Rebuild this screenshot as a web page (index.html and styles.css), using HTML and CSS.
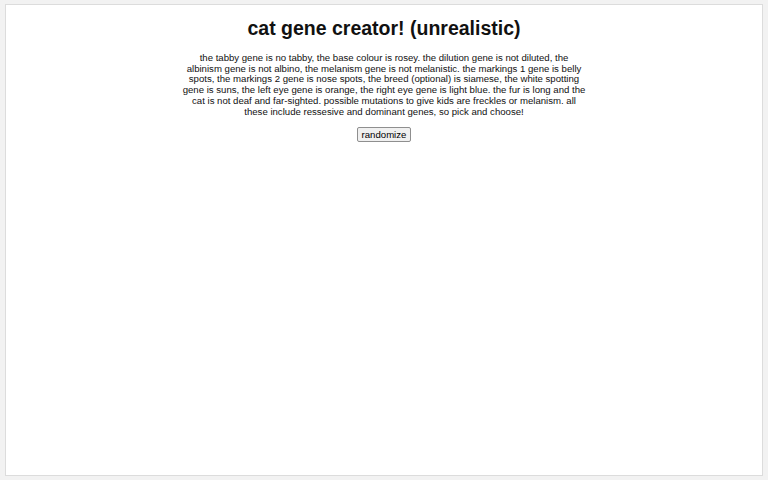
FILE: index.html
```html
<!DOCTYPE html>
<html>
	<head>
		<meta charset="utf-8" />
		<title>cat gene creator</title>
		<link rel="stylesheet" href="styles.css">
	</head>
	<body>
		<div id="page">
			<h1>cat gene creator! (unrealistic)</h1>
			<p id="genes">the tabby gene is no tabby, the base colour is rosey. the dilution gene is not diluted, the albinism gene is not albino, the melanism gene is not melanistic. the markings 1 gene is belly spots, the markings 2 gene is nose spots, the breed (optional) is siamese, the white spotting gene is suns, the left eye gene is orange, the right eye gene is light blue. the fur is long and the cat is not deaf and far-sighted. possible mutations to give kids are freckles or melanism. all these include ressesive and dominant genes, so pick and choose!</p>
			<button id="btn">randomize</button>
		</div>
	</body>
</html>
```

FILE: styles.css
```css
*{
	padding: 0;
	margin: 0;
	box-sizing: border-box;
}
html, body{
	height: 100%;
}
body{
	background-color: #f2f2f2;
	padding: 4px 5px;
	font-family: "Liberation Sans", Arial, sans-serif;
	color: #111;
}
#page{
	height: 100%;
	background-color: #fff;
	border: 1px solid #dcdcdc;
	text-align: center;
	padding-top: 12px;
}
h1{
	font-size: 19.5px;
	font-weight: bold;
	line-height: 23px;
	margin-bottom: 13px;
}
#genes{
	width: 404px;
	margin: 0 auto;
	font-size: 9.6px;
	line-height: 10.7px;
}
#btn{
	margin-top: 10px;
	font-family: "Liberation Sans", Arial, sans-serif;
	font-size: 9.6px;
	padding: 0 4px;
	height: 15px;
	background-color: #f0f0f0;
	border: 1px solid #8f8f8f;
	border-radius: 2px;
	color: #000;
}
```
